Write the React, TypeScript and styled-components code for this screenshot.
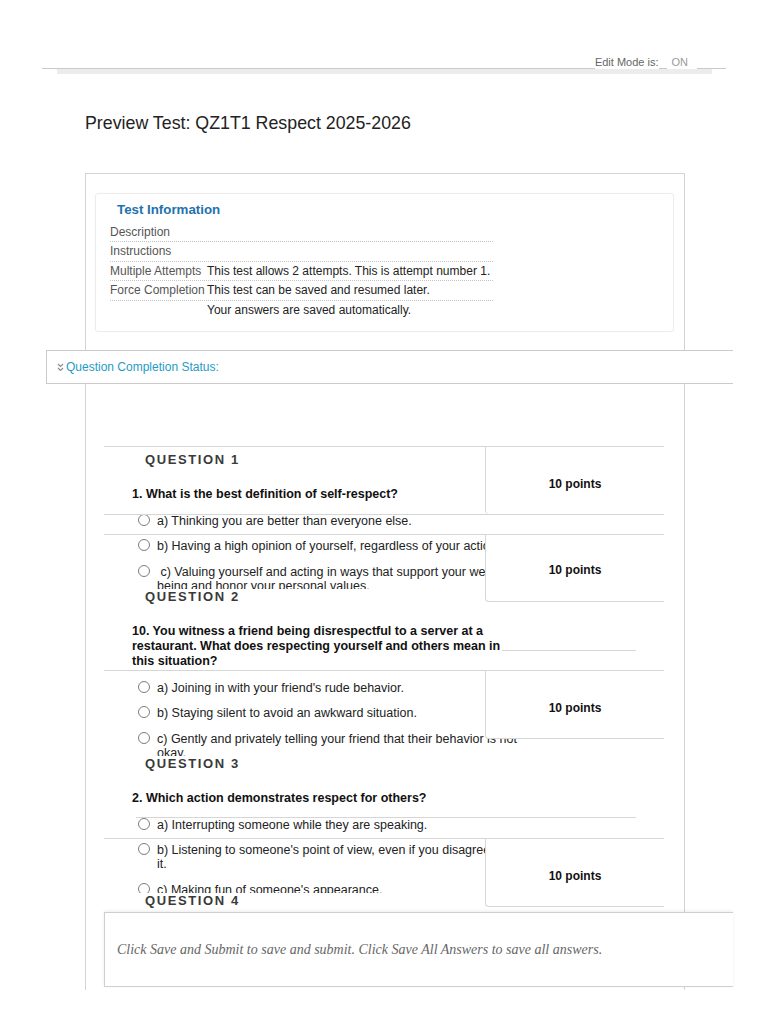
import React from "react";
import styled, { createGlobalStyle } from "styled-components";

const GlobalStyle = createGlobalStyle`
  body {
    margin: 0;
    background: #fff;
    font-family: "Liberation Sans", Arial, sans-serif;
  }
  * {
    box-sizing: border-box;
  }
`;

const Page = styled.div`
  position: relative;
  height: 990px;
  overflow: hidden;
`;

const TopBar = styled.div`
  display: flex;
  align-items: flex-end;
  height: 69px;
  margin: 0 42px;
`;

const Rule = styled.div<{ $w?: number }>`
  flex: ${(p) => (p.$w ? `0 0 ${p.$w}px` : "1")};
  border-bottom: 1px solid #c9c9c9;
`;

const EditLabel = styled.span`
  font-size: 11px;
  line-height: 13px;
  color: #666;
`;

const EditValue = styled.span`
  margin: 0 9px 0 5px;
  font-size: 11px;
  line-height: 13px;
  color: #9a9a9a;
`;

const Band = styled.div`
  height: 5px;
  margin: 0 56px 0 57px;
  background: #ececec;
`;

const Title = styled.h1`
  margin: 38px 0 0 85px;
  font-size: 17.8px;
  line-height: 22px;
  font-weight: normal;
  color: #222;
`;

const OuterBox = styled.div`
  width: 600px;
  margin: 39px 0 0 85px;
  padding-top: 19px;
  border: 1px solid #d4d4d4;
  border-bottom: none;
  min-height: 900px;
`;

const InfoCard = styled.section`
  margin: 0 10px 0 9px;
  padding: 7px 0 12px 14px;
  border: 1px solid #ececec;
  border-radius: 3px;
  box-shadow: 0 0 2px rgba(0, 0, 0, 0.04);
`;

const CardTitle = styled.h2`
  margin: 0 0 0 7px;
  font-size: 13.3px;
  line-height: 18px;
  font-weight: bold;
  color: #2272ad;
`;

const InfoTable = styled.div`
  width: 383px;
  margin-top: 3.75px;
`;

const InfoRow = styled.div<{ $last?: boolean }>`
  display: flex;
  font-size: 12px;
  line-height: 18.5px;
  border-bottom: ${(p) => (p.$last ? "none" : "1px dotted #c4c4c4")};
`;

const InfoLabel = styled.span`
  flex: 0 0 97px;
  color: #555;
  white-space: nowrap;
`;

const InfoValue = styled.span`
  color: #222;
  white-space: nowrap;
`;

const CompletionBar = styled.div`
  display: flex;
  align-items: center;
  width: 687px;
  height: 34px;
  margin: 18px 0 0 -40px;
  padding-left: 10px;
  border: 1px solid #cbcbcb;
  border-right: none;
  background: #fff;
  font-size: 12px;
  color: #1f9bc5;
`;

const Chevrons = styled.svg`
  width: 7px;
  height: 9px;
  margin-right: 2px;
`;

const QuestionArea = styled.div`
  display: grid;
  width: 560px;
  margin: 62px 0 0 18px;
  & > * {
    grid-area: 1 / 1;
  }
`;

const TextLayer = styled.div`
  display: flex;
  flex-direction: column;
  padding-top: 6px;
`;

const QLabel = styled.div`
  margin-left: 41px;
  font-size: 13px;
  line-height: 16px;
  font-weight: bold;
  letter-spacing: 1.6px;
  color: #3a3a3a;
`;

const QText = styled.div`
  max-width: 378px;
  margin: 19px 0 0 28px;
  font-size: 12.5px;
  line-height: 15px;
  font-weight: bold;
  color: #111;
`;

const AnswerList = styled.div`
  display: flex;
  flex-direction: column;
  gap: 11.5px;
  height: 75.5px;
  margin-top: 11.5px;
  overflow: hidden;
`;

const Answer = styled.div`
  display: flex;
  align-items: flex-start;
  padding-left: 34px;
`;

const Radio = styled.span`
  flex: 0 0 12px;
  height: 12px;
  border: 1px solid #7d7d7d;
  border-radius: 50%;
  background: #fff;
`;

const AnswerText = styled.span`
  width: 365px;
  margin-left: 7px;
  font-size: 12.5px;
  line-height: 14px;
  color: #222;
`;

const RuleLayer = styled.div`
  display: flex;
  flex-direction: column;
  pointer-events: none;
`;

const PointsRow = styled.div<{ $mt: number; $underline?: boolean }>`
  display: flex;
  justify-content: flex-end;
  margin-top: ${(p) => p.$mt}px;
  border-top: 1px solid #d6d6d6;
  border-bottom: ${(p) => (p.$underline ? "1px solid #d6d6d6" : "none")};
`;

const PointsBox = styled.div<{ $h: number; $pad: number; $open?: boolean }>`
  display: flex;
  align-items: center;
  justify-content: center;
  width: 179px;
  height: ${(p) => p.$h}px;
  padding-top: ${(p) => p.$pad}px;
  border-left: 1px solid #d6d6d6;
  border-bottom: ${(p) => (p.$open ? "none" : "1px solid #d6d6d6")};
  border-bottom-left-radius: 4px;
  background: #fff;
  font-size: 12px;
  font-weight: bold;
  color: #111;
`;

const PartialRule = styled.div<{ $mt: number; $ml: number; $w: number }>`
  width: ${(p) => p.$w}px;
  margin: ${(p) => p.$mt}px 0 0 ${(p) => p.$ml}px;
  border-top: 1px solid #d6d6d6;
`;

const Footer = styled.div`
  position: absolute;
  left: 104px;
  top: 912px;
  width: 629px;
  height: 75px;
  display: flex;
  align-items: center;
  padding-left: 12px;
  border: 1px solid #cfcfcf;
  border-right: none;
  background: #fff;
  box-shadow: 0 -1px 3px rgba(0, 0, 0, 0.08);
  font-family: "Liberation Serif", "Times New Roman", serif;
  font-style: italic;
  font-size: 14px;
  color: #666;
`;

const info = [
  { label: "Description", value: "" },
  { label: "Instructions", value: "" },
  {
    label: "Multiple Attempts",
    value: "This test allows 2 attempts. This is attempt number 1.",
  },
  { label: "Force Completion", value: "This test can be saved and resumed later." },
  { label: "", value: "Your answers are saved automatically." },
];

const questions = [
  {
    label: "QUESTION 1",
    text: "1. What is the best definition of self-respect?",
    answers: [
      "a) Thinking you are better than everyone else.",
      "b) Having a high opinion of yourself, regardless of your actions.",
      "\u00a0c) Valuing yourself and acting in ways that support your well-being and honor your personal values.",
    ],
  },
  {
    label: "QUESTION 2",
    text: "10. You witness a friend being disrespectful to a server at a restaurant. What does respecting yourself and others mean in this situation?",
    answers: [
      "a) Joining in with your friend's rude behavior.",
      "b) Staying silent to avoid an awkward situation.",
      "c) Gently and privately telling your friend that their behavior is not okay.",
    ],
  },
  {
    label: "QUESTION 3",
    text: "2. Which action demonstrates respect for others?",
    answers: [
      "a) Interrupting someone while they are speaking.",
      "b) Listening to someone's point of view, even if you disagree with it.",
      "c) Making fun of someone's appearance.",
    ],
  },
  {
    label: "QUESTION 4",
    text: "3. Which of these is the best way to show respect for yourself when you make a mistake?",
    answers: [
      "a) Blaming others for what happened.",
      "b) Taking responsibility and learning from it.",
      "c) Pretending it never happened.",
    ],
  },
];

const App = () => {
  return (
    <Page>
      <GlobalStyle />
      <TopBar>
        <Rule />
        <EditLabel>Edit Mode is:</EditLabel>
        <Rule $w={8} />
        <EditValue>ON</EditValue>
        <Rule $w={29} />
      </TopBar>
      <Band />
      <Title>Preview Test: QZ1T1 Respect 2025-2026</Title>

      <OuterBox>
        <InfoCard>
          <CardTitle>Test Information</CardTitle>
          <InfoTable>
            {info.map((row, i) => (
              <InfoRow key={i} $last={i === info.length - 1}>
                <InfoLabel>{row.label}</InfoLabel>
                <InfoValue>{row.value}</InfoValue>
              </InfoRow>
            ))}
          </InfoTable>
        </InfoCard>

        <CompletionBar>
          <Chevrons viewBox="0 0 7 9">
            <path
              d="M1 1 L3.5 3.5 L6 1 M1 5 L3.5 7.5 L6 5"
              fill="none"
              stroke="#8a8a8a"
              strokeWidth="1.1"
            />
          </Chevrons>
          Question Completion Status:
        </CompletionBar>

        <QuestionArea>
          <TextLayer>
            {questions.map((q) => (
              <React.Fragment key={q.label}>
                <QLabel>{q.label}</QLabel>
                <QText>{q.text}</QText>
                <AnswerList>
                  {q.answers.map((a) => (
                    <Answer key={a}>
                      <Radio />
                      <AnswerText>{a}</AnswerText>
                    </Answer>
                  ))}
                </AnswerList>
              </React.Fragment>
            ))}
          </TextLayer>

          <RuleLayer>
            <PointsRow $mt={0} $underline>
              <PointsBox $h={67} $pad={6} $open>
                10 points
              </PointsBox>
            </PointsRow>
            <PointsRow $mt={19}>
              <PointsBox $h={67} $pad={4}>
                10 points
              </PointsBox>
            </PointsRow>
            <PartialRule $mt={48} $ml={398} $w={134} />
            <PointsRow $mt={19}>
              <PointsBox $h={68} $pad={6}>
                10 points
              </PointsBox>
            </PointsRow>
            <PartialRule $mt={78} $ml={32} $w={500} />
            <PointsRow $mt={20}>
              <PointsBox $h={68} $pad={6}>
                10 points
              </PointsBox>
            </PointsRow>
          </RuleLayer>
        </QuestionArea>
      </OuterBox>

      <Footer>
        Click Save and Submit to save and submit. Click Save All Answers to save all answers.
      </Footer>
    </Page>
  );
};

export default App;
